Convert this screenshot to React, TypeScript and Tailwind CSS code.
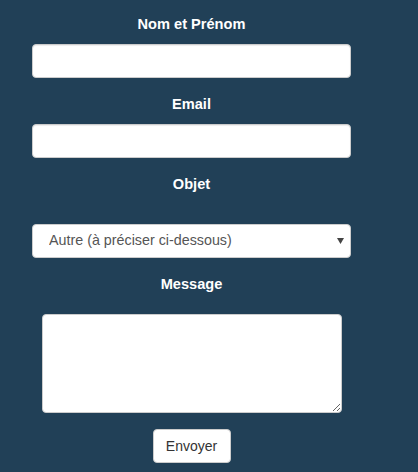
import { useState } from "react";

const labelCls =
  "block text-center font-bold text-white text-[14.6px] leading-5";
const fieldCls =
  "block w-full h-[34px] rounded-[4px] border border-[#cccccc] bg-white px-3 text-[14px] text-[#555555] outline-none shadow-[inset_0_1px_1px_rgba(0,0,0,0.075)]";

export default function App() {
  const [objet, setObjet] = useState("autre");

  return (
    <div
      className="min-h-screen w-full bg-[#214057] pt-[14px]"
      style={{ fontFamily: '"Liberation Sans", Arial, sans-serif' }}
    >
      <form className="ml-[32px] flex w-[319px] flex-col items-center">
        <label className={labelCls}>Nom et Prénom</label>
        <input type="text" className={`${fieldCls} mt-[10px]`} />

        <label className={`${labelCls} mt-[16px]`}>Email</label>
        <input type="email" className={`${fieldCls} mt-[10px]`} />

        <label className={`${labelCls} mt-[16px]`}>Objet</label>
        <div className="relative mt-[30px] w-full">
          <select
            value={objet}
            onChange={(e) => setObjet(e.target.value)}
            className="block h-[34px] w-full appearance-none rounded-[4px] border border-[#cccccc] bg-white pl-[16px] pr-8 text-[14.3px] text-[#555555] outline-none"
          >
            <option value="devis">Demande de devis</option>
            <option value="info">Demande d'information</option>
            <option value="autre">Autre (à préciser ci-dessous)</option>
          </select>
          <svg
            className="pointer-events-none absolute right-[7px] top-[14px]"
            width="7"
            height="6"
            viewBox="0 0 7 6"
          >
            <path d="M0 0h7L3.5 6z" fill="#444444" />
          </svg>
        </div>

        <label className={`${labelCls} mt-[16px]`}>Message</label>
        <textarea className="mt-[20px] block h-[99px] w-[300px] rounded-[4px] border border-[#cccccc] bg-white p-2 text-[14px] text-[#555555] outline-none" />

        <button
          type="button"
          className="mt-[16px] h-[34px] w-[78px] rounded-[4px] border border-[#cccccc] bg-white text-[14px] text-[#333333]"
        >
          Envoyer
        </button>
      </form>
    </div>
  );
}
